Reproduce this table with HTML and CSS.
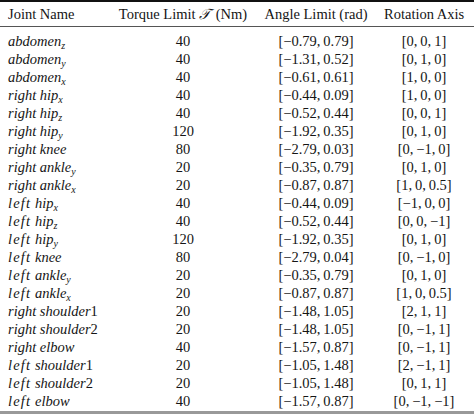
FILE: index.html
```html
<!DOCTYPE html>
<html>
<head>
<meta charset="utf-8">
<link rel="stylesheet" href="styles.css">
</head>
<body>
<table class="jt">
<colgroup><col class="c1"><col class="c2"><col class="c3"><col class="c4"><col class="c5"></colgroup>
<thead>
<tr><th class="name">Joint Name</th><th>Torque Limit <span class="scr">𝒯</span> (Nm)</th><th>Angle Limit (rad)</th><th>Rotation Axis</th><th></th></tr>
</thead>
<tbody>
<tr><td class="name"><i>abdomen<sub>z</sub></i></td><td>40</td><td>[−0.79,&thinsp;0.79]</td><td>[0,&thinsp;0,&thinsp;1]</td><td></td></tr>
<tr><td class="name"><i>abdomen<sub>y</sub></i></td><td>40</td><td>[−1.31,&thinsp;0.52]</td><td>[0,&thinsp;1,&thinsp;0]</td><td></td></tr>
<tr><td class="name"><i>abdomen<sub>x</sub></i></td><td>40</td><td>[−0.61,&thinsp;0.61]</td><td>[1,&thinsp;0,&thinsp;0]</td><td></td></tr>
<tr><td class="name"><i>right hip<sub>x</sub></i></td><td>40</td><td>[−0.44,&thinsp;0.09]</td><td>[1,&thinsp;0,&thinsp;0]</td><td></td></tr>
<tr><td class="name"><i>right hip<sub>z</sub></i></td><td>40</td><td>[−0.52,&thinsp;0.44]</td><td>[0,&thinsp;0,&thinsp;1]</td><td></td></tr>
<tr><td class="name"><i>right hip<sub>y</sub></i></td><td>120</td><td>[−1.92,&thinsp;0.35]</td><td>[0,&thinsp;1,&thinsp;0]</td><td></td></tr>
<tr><td class="name"><i>right knee</i></td><td>80</td><td>[−2.79,&thinsp;0.03]</td><td>[0,&thinsp;−1,&thinsp;0]</td><td></td></tr>
<tr><td class="name"><i>right ankle<sub>y</sub></i></td><td>20</td><td>[−0.35,&thinsp;0.79]</td><td>[0,&thinsp;1,&thinsp;0]</td><td></td></tr>
<tr><td class="name"><i>right ankle<sub>x</sub></i></td><td>20</td><td>[−0.87,&thinsp;0.87]</td><td>[1,&thinsp;0,&thinsp;0.5]</td><td></td></tr>
<tr><td class="name"><i><span class="lf">left</span> hip<sub>x</sub></i></td><td>40</td><td>[−0.44,&thinsp;0.09]</td><td>[−1,&thinsp;0,&thinsp;0]</td><td></td></tr>
<tr><td class="name"><i><span class="lf">left</span> hip<sub>z</sub></i></td><td>40</td><td>[−0.52,&thinsp;0.44]</td><td>[0,&thinsp;0,&thinsp;−1]</td><td></td></tr>
<tr><td class="name"><i><span class="lf">left</span> hip<sub>y</sub></i></td><td>120</td><td>[−1.92,&thinsp;0.35]</td><td>[0,&thinsp;1,&thinsp;0]</td><td></td></tr>
<tr><td class="name"><i><span class="lf">left</span> knee</i></td><td>80</td><td>[−2.79,&thinsp;0.04]</td><td>[0,&thinsp;−1,&thinsp;0]</td><td></td></tr>
<tr><td class="name"><i><span class="lf">left</span> ankle<sub>y</sub></i></td><td>20</td><td>[−0.35,&thinsp;0.79]</td><td>[0,&thinsp;1,&thinsp;0]</td><td></td></tr>
<tr><td class="name"><i><span class="lf">left</span> ankle<sub>x</sub></i></td><td>20</td><td>[−0.87,&thinsp;0.87]</td><td>[1,&thinsp;0,&thinsp;0.5]</td><td></td></tr>
<tr><td class="name"><i>right shoulder</i>1</td><td>20</td><td>[−1.48,&thinsp;1.05]</td><td>[2,&thinsp;1,&thinsp;1]</td><td></td></tr>
<tr><td class="name"><i>right shoulder</i>2</td><td>20</td><td>[−1.48,&thinsp;1.05]</td><td>[0,&thinsp;−1,&thinsp;1]</td><td></td></tr>
<tr><td class="name"><i>right elbow</i></td><td>40</td><td>[−1.57,&thinsp;0.87]</td><td>[0,&thinsp;−1,&thinsp;1]</td><td></td></tr>
<tr><td class="name"><i><span class="lf">left</span> shoulder</i>1</td><td>20</td><td>[−1.05,&thinsp;1.48]</td><td>[2,&thinsp;−1,&thinsp;1]</td><td></td></tr>
<tr><td class="name"><i><span class="lf">left</span> shoulder</i>2</td><td>20</td><td>[−1.05,&thinsp;1.48]</td><td>[0,&thinsp;1,&thinsp;1]</td><td></td></tr>
<tr><td class="name"><i><span class="lf">left</span> elbow</i></td><td>40</td><td>[−1.57,&thinsp;0.87]</td><td>[0,&thinsp;−1,&thinsp;−1]</td><td></td></tr>
</tbody>
</table>
</body>
</html>
```
FILE: styles.css
```css
html, body {
  margin: 0;
  padding: 0;
  background: #fff;
}
.jt {
  width: 474px;
  border-collapse: collapse;
  table-layout: fixed;
  font-family: "Liberation Serif", "DejaVu Serif", serif;
  font-size: 14.5px;
  color: #151515;
  border-top: 2px solid #111;
  border-bottom: 3px solid #999;
}
.c1 { width: 118px; }
.c2 { width: 130px; }
.c3 { width: 136px; }
.c4 { width: 80px; }
.c5 { width: 10px; }
.jt th, .jt td {
  padding: 0;
  text-align: center;
  white-space: nowrap;
  font-weight: normal;
  line-height: 18px;
}
.jt th {
  padding-top: 3px;
  padding-bottom: 3px;
}
.jt thead tr {
  border-bottom: 1px solid #555;
}
.jt tbody tr:first-child td {
  padding-top: 5px;
}
.jt tbody tr:last-child td {
  padding-bottom: 1px;
}
.jt .name {
  text-align: left;
  padding-left: 8px;
}
.jt sub {
  font-size: 10px;
  line-height: 0;
  vertical-align: -3px;
}
.lf {
  letter-spacing: 1.2px;
}
.scr {
  font-style: italic;
  margin-right: 2px;
}
```
